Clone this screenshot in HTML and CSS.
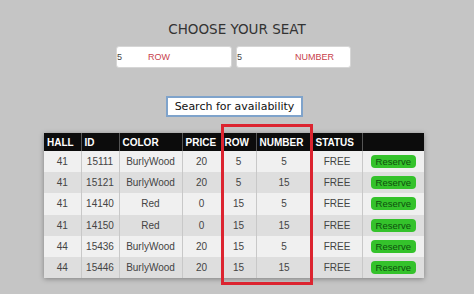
FILE: index.html
```html
<!DOCTYPE html>
<html>
<head>
<meta charset="utf-8">
<link rel="stylesheet" href="styles.css">
</head>
<body>
<div class="page">
  <h1 class="title">CHOOSE YOUR SEAT</h1>
  <div class="fields">
    <div class="field field-row"><span class="val">5</span><span class="lbl">ROW</span></div>
    <div class="field field-num"><span class="val">5</span><span class="lbl">NUMBER</span></div>
  </div>
  <div class="search-wrap"><button class="search">Search for availability</button></div>
  <div class="table-wrap">
    <table class="seats">
      <colgroup>
        <col style="width:37px"><col style="width:38px"><col style="width:63px"><col style="width:39px">
        <col style="width:35px"><col style="width:56px"><col style="width:50px"><col style="width:62px">
      </colgroup>
      <thead>
        <tr><th>HALL</th><th>ID</th><th>COLOR</th><th>PRICE</th><th>ROW</th><th>NUMBER</th><th>STATUS</th><th></th></tr>
      </thead>
      <tbody>
        <tr><td>41</td><td>15111</td><td>BurlyWood</td><td>20</td><td>5</td><td>5</td><td>FREE</td><td><span class="reserve">Reserve</span></td></tr>
        <tr><td>41</td><td>15121</td><td>BurlyWood</td><td>20</td><td>5</td><td>15</td><td>FREE</td><td><span class="reserve">Reserve</span></td></tr>
        <tr><td>41</td><td>14140</td><td>Red</td><td>0</td><td>15</td><td>5</td><td>FREE</td><td><span class="reserve">Reserve</span></td></tr>
        <tr><td>41</td><td>14150</td><td>Red</td><td>0</td><td>15</td><td>15</td><td>FREE</td><td><span class="reserve">Reserve</span></td></tr>
        <tr><td>44</td><td>15436</td><td>BurlyWood</td><td>20</td><td>15</td><td>5</td><td>FREE</td><td><span class="reserve">Reserve</span></td></tr>
        <tr><td>44</td><td>15446</td><td>BurlyWood</td><td>20</td><td>15</td><td>15</td><td>FREE</td><td><span class="reserve">Reserve</span></td></tr>
      </tbody>
    </table>
    <div class="highlight"></div>
  </div>
</div>
</body>
</html>
```

FILE: styles.css
```css
html, body {
  margin: 0;
  padding: 0;
  background: #c5c5c5;
}
.page {
  width: 474px;
  height: 294px;
  position: relative;
  overflow: hidden;
  font-family: "DejaVu Sans", sans-serif;
}
.title {
  margin: 0;
  padding-top: 21px;
  height: 25px;
  text-align: center;
  font-size: 13.5px;
  font-weight: normal;
  color: #333;
}
.fields {
  display: flex;
  gap: 4px;
  padding-left: 116px;
}
.field {
  height: 22px;
  box-sizing: border-box;
  background: #fff;
  border: 1px solid #d6d6d6;
  border-radius: 3px;
  display: flex;
  align-items: center;
  font-family: "Liberation Sans", Arial, sans-serif;
  font-size: 9px;
}
.field-row { width: 116px; }
.field-num { width: 115px; }
.val { color: #444; }
.lbl { color: #c8414b; }
.field-row .lbl { margin-left: 26px; }
.field-num .lbl { margin-left: 53px; }
.search-wrap {
  padding-top: 28px;
  padding-left: 166px;
  height: 21px;
}
.search {
  width: 137px;
  height: 21px;
  box-sizing: border-box;
  margin: 0;
  padding: 0;
  background: #fff;
  border: 2px solid #7fa3cb;
  font-family: "DejaVu Sans", sans-serif;
  font-size: 11px;
  color: #111;
  display: block;
}
.table-wrap {
  margin-top: 16px;
  margin-left: 44px;
  width: 380px;
}
.seats {
  border-collapse: collapse;
  table-layout: fixed;
  width: 380px;
  font-family: "Liberation Sans", Arial, sans-serif;
  box-shadow: 0 1px 5px rgba(0,0,0,0.35);
}
.seats th {
  background: #0c0c0c;
  color: #fff;
  font-size: 10px;
  font-weight: bold;
  text-align: left;
  padding: 0 0 0 3px;
  height: 18px;
  border-left: 1px solid #555;
}
.seats th:first-child { border-left: none; }
.seats td {
  height: 21px;
  padding: 0;
  text-align: center;
  font-size: 10px;
  color: #444;
  border-left: 1px solid #c8c8c8;
}
.seats td:first-child { border-left: none; }
.seats tbody tr:nth-child(odd) td { background: #f0f0f0; }
.seats tbody tr:nth-child(even) td { background: #dedede; }
.seats tbody tr:nth-child(3) td, .seats tbody tr:nth-child(4) td { height: 21.5px; }
.reserve {
  display: inline-block;
  width: 45px;
  height: 13px;
  line-height: 13px;
  background: #34c22b;
  border-radius: 4px;
  color: #0e4f0e;
  font-size: 9.5px;
}
.highlight {
  position: absolute;
  left: 221px;
  top: 124px;
  width: 92px;
  height: 161px;
  box-sizing: border-box;
  border: 3px solid #dc2430;
}
```
